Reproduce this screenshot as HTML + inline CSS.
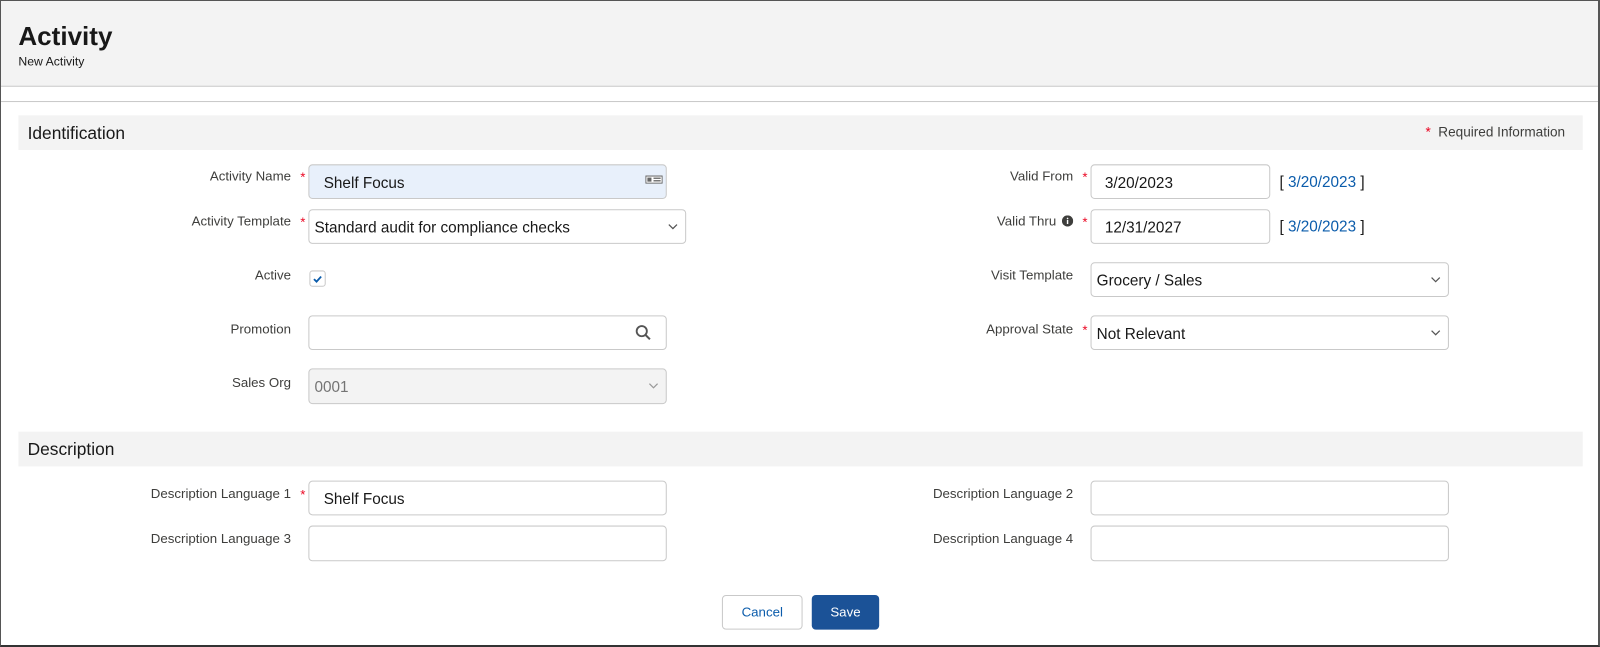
<!DOCTYPE html>
<html><head><meta charset="utf-8"><style>
*{box-sizing:border-box;margin:0;padding:0}
body{width:1600px;height:647px;overflow:hidden;background:#fff;font-family:"Liberation Sans",Arial,sans-serif;color:#181818;position:relative}
.wrap{position:absolute;left:0;top:0;width:1567px;height:634px;transform:scale(1.0211,1.0205);transform-origin:0 0}
.frame{position:absolute;left:0;top:0;width:1600px;height:647px;border:1px solid #555;border-right:2px solid #555;border-bottom:2px solid #333}
.hdr{position:absolute;left:1px;top:1px;width:1565px;height:84px;background:#f3f3f3;border-bottom:1px solid #c9c9c9}
.line2{position:absolute;left:1px;top:99px;width:1565px;height:1px;background:#c9c9c9}
.a{position:absolute}
.band{position:absolute;left:18px;width:1532px;height:34px;background:#f3f3f3}
.band span{position:absolute;left:9px;top:8px;font-size:17px;color:#181818}
.lbl{position:absolute;font-size:13px;color:#3e3e3c;text-align:right}
.req{position:absolute;color:#ea001e;font-size:13px}
.inp{position:absolute;height:34px;border:1px solid #c9c9c9;border-radius:4px;background:#fff;font-size:15px;padding:9px 0 0 13px}
.sel{padding-left:5px}
.chev{position:absolute;right:6px;top:12px;width:12px;height:8px}
.link{color:#0b5cab}
</style></head><body>
<div class="wrap">
<div class="hdr"></div>
<div class="line2"></div>
<div class="a" style="left:18px;top:22px;font-size:25.5px;font-weight:bold">Activity</div>
<div class="a" style="left:18px;top:53px;font-size:12px">New Activity</div>

<div class="band" style="top:113px"><span>Identification</span></div>
<div class="a" style="left:1396px;top:122px;font-size:13.3px;color:#3e3e3c"><span style="color:#ea001e">*</span>&nbsp;&nbsp;Required Information</div>

<div class="lbl" style="right:1282px;top:165px">Activity Name</div><div class="req" style="left:294px;top:166px">*</div>
<div class="inp" style="left:302px;top:161px;width:351px;background:#e8f0fb;padding-left:14px">Shelf Focus
<svg class="a" style="right:3px;top:10px" width="17" height="8" viewBox="0 0 17 8"><rect x="0.5" y="0.5" width="16" height="7" fill="#fff" stroke="#666"/><rect x="2" y="2" width="4" height="4" fill="#666"/><rect x="8" y="2" width="7" height="1.3" fill="#666"/><rect x="8" y="4.5" width="7" height="1.3" fill="#666"/></svg></div>

<div class="lbl" style="right:1282px;top:209px">Activity Template</div><div class="req" style="left:294px;top:210px">*</div>
<div class="inp sel" style="left:302px;top:205px;width:370px">Standard audit for compliance checks<svg class="chev" viewBox="0 0 12 8"><path d="M2 2l4 4 4-4" fill="none" stroke="#555" stroke-width="1.2"/></svg></div>

<div class="lbl" style="right:1282px;top:262px">Active</div>
<div class="a" style="left:303px;top:265px;width:16px;height:16px;border:1px solid #c9c9c9;border-radius:3px"><svg width="14" height="14" viewBox="0 0 14 14"><path d="M3.5 7.5l2.5 2.5 4.5-5" fill="none" stroke="#0b5cab" stroke-width="1.8"/></svg></div>

<div class="lbl" style="right:1282px;top:315px">Promotion</div>
<div class="inp" style="left:302px;top:309px;width:351px"><svg class="a" style="right:14px;top:8px" width="16" height="17" viewBox="0 0 16 17"><circle cx="6.5" cy="6.5" r="5" fill="none" stroke="#555" stroke-width="1.8"/><path d="M10 10l4.5 4.5" stroke="#555" stroke-width="2"/></svg></div>

<div class="lbl" style="right:1282px;top:367px">Sales Org</div>
<div class="inp sel" style="left:302px;top:361px;width:351px;height:35px;background:#f3f3f3;color:#747474">0001<svg class="chev" viewBox="0 0 12 8"><path d="M2 2l4 4 4-4" fill="none" stroke="#999" stroke-width="1.2"/></svg></div>

<div class="lbl" style="right:516px;top:165px">Valid From</div><div class="req" style="left:1060px;top:166px">*</div>
<div class="inp" style="left:1068px;top:161px;width:176px">3/20/2023</div>
<div class="a" style="left:1253px;top:170px;font-size:15px">[ <span class="link">3/20/2023</span> ]</div>

<div class="lbl" style="right:516px;top:209px">Valid Thru <svg width="11" height="11" viewBox="0 0 11 11" style="vertical-align:-1px;margin-left:2px"><circle cx="5.5" cy="5.5" r="5.5" fill="#3e3e3c"/><rect x="4.8" y="4.5" width="1.4" height="4" fill="#fff"/><circle cx="5.5" cy="3" r="0.8" fill="#fff"/></svg></div><div class="req" style="left:1060px;top:210px">*</div>
<div class="inp" style="left:1068px;top:205px;width:176px">12/31/2027</div>
<div class="a" style="left:1253px;top:214px;font-size:15px">[ <span class="link">3/20/2023</span> ]</div>

<div class="lbl" style="right:516px;top:262px">Visit Template</div>
<div class="inp sel" style="left:1068px;top:257px;width:351px">Grocery / Sales<svg class="chev" viewBox="0 0 12 8"><path d="M2 2l4 4 4-4" fill="none" stroke="#555" stroke-width="1.2"/></svg></div>

<div class="lbl" style="right:516px;top:315px">Approval State</div><div class="req" style="left:1060px;top:316px">*</div>
<div class="inp sel" style="left:1068px;top:309px;width:351px">Not Relevant<svg class="chev" viewBox="0 0 12 8"><path d="M2 2l4 4 4-4" fill="none" stroke="#555" stroke-width="1.2"/></svg></div>

<div class="band" style="top:423px"><span>Description</span></div>

<div class="lbl" style="right:1282px;top:476px">Description Language 1</div><div class="req" style="left:294px;top:477px">*</div>
<div class="inp" style="left:302px;top:471px;width:351px;padding-left:14px">Shelf Focus</div>
<div class="lbl" style="right:1282px;top:520px">Description Language 3</div>
<div class="inp" style="left:302px;top:515px;width:351px;height:35px"></div>

<div class="lbl" style="right:516px;top:476px">Description Language 2</div>
<div class="inp" style="left:1068px;top:471px;width:351px"></div>
<div class="lbl" style="right:516px;top:520px">Description Language 4</div>
<div class="inp" style="left:1068px;top:515px;width:351px;height:35px"></div>

<div class="a" style="left:707px;top:583px;width:79px;height:34px;border:1px solid #c9c9c9;border-radius:4px;color:#0b5cab;font-size:13px;text-align:center;line-height:32px">Cancel</div>
<div class="a" style="left:795px;top:583px;width:66px;height:34px;background:#1b5297;border-radius:4px;color:#fff;font-size:13px;text-align:center;line-height:34px">Save</div>
</div>
<div class="frame"></div>
</body></html>
